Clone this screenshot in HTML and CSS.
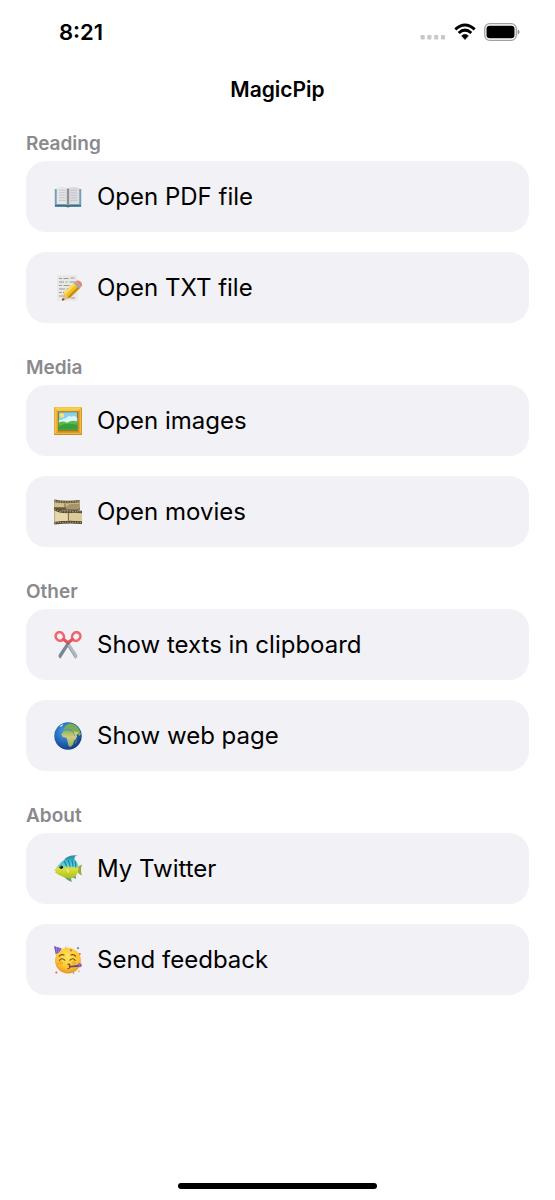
FILE: index.html
```html
<!DOCTYPE html>
<html lang="en">
<head>
<meta charset="utf-8">
<meta name="viewport" content="width=device-width, initial-scale=1">
<title>MagicPip</title>
<link rel="stylesheet" href="styles.css">
</head>
<body>
<div class="screen">
  <div class="status-bar">
    <time class="clock">8:21</time>
    <div class="indicators">
      <svg class="signal" viewBox="0 0 26 18" aria-hidden="true">
        <g fill="#c8c8c8"><rect x=".5" y="12" width="4.200" height="4.500" rx="1"/><rect x="7.300" y="12" width="4.200" height="4.500" rx="1"/><rect x="14.100" y="12" width="4.200" height="4.500" rx="1"/><rect x="20.900" y="12" width="4.200" height="4.500" rx="1"/></g>
      </svg>
      <svg class="wifi" viewBox="0 0 22 18" aria-hidden="true">
        <g fill="none" stroke="#000" stroke-width="3">
          <path d="M1.300 6.300Q11-2.400 20.700 6.300"/>
          <path d="M4.700 10Q11 4.200 17.300 10"/>
        </g>
        <path d="M7.600 12.800Q11 9.700 14.400 12.800L11 16.600Z" stroke="#000" stroke-width=".6" stroke-linejoin="round"/>
      </svg>
      <svg class="battery" viewBox="0 0 36 18" aria-hidden="true">
        <rect x=".7" y=".7" width="31.600" height="16.600" rx="5" fill="#fff" stroke="#a0a0a0" stroke-width="1.300"/>
        <rect x="2.500" y="2.700" width="28" height="12.600" rx="3.200"/>
        <path d="M33.600 6.300Q35.600 7.200 35.600 9T33.600 11.700Z" fill="#8f8f8f"/>
      </svg>
    </div>
  </div>

  <header class="nav-bar"><h1 class="title">MagicPip</h1></header>

  <main class="menu">
    <section class="group" aria-labelledby="reading">
      <h2 class="group-label" id="reading">Reading</h2>
      <div class="cards">
        <button class="card" type="button">
          <svg class="icon" viewBox="0 0 28 28" aria-hidden="true">
            <path d="M.8 6H3V21H25V6H27.200V23.500H16Q14 25 12 23.500H.8Z" fill="#6f9fb8"/>
            <path d="M1 22H27V23.700H16Q14 25 12 23.700H1Z" fill="#3f6f88"/>
            <path d="M2.700 5Q9 2.800 14 5.500V22Q9 19.600 2.700 21.300Z" fill="#e6e5e8"/>
            <path d="M25.300 5Q19 2.800 14 5.500V22Q19 19.600 25.300 21.300Z" fill="#dcdbe0"/>
            <path d="M12.800 5.200L14 5.700 15.200 5.200V21.400L14 22.300 12.800 21.400Z" fill="#8d9298"/>
            <path d="M5 7.500Q8.500 6.500 11.500 7.700M5 10Q8.500 9 11.500 10.200M5 12.500Q8.500 11.500 11.500 12.700M5 15Q8.500 14 11.500 15.200M5 17.500Q8.500 16.500 11.500 17.700M16.500 7.700Q19.500 6.500 23 7.500M16.500 10.200Q19.500 9 23 10M16.500 12.700Q19.500 11.500 23 12.500M16.500 15.200Q19.500 14 23 15M16.500 17.700Q19.500 16.500 23 17.500" fill="none" stroke="#b9b9be" stroke-width=".7"/>
          </svg>
          <span>Open PDF file</span>
        </button>
        <button class="card" type="button">
          <svg class="icon" viewBox="0 0 28 28" aria-hidden="true">
            <rect x="3" y="1" width="20.500" height="26" fill="#e9e8e4"/>
            <path d="M5 4.500h3m1.500 0h5m2-.5h4M5 8h5m1.500 0h2m2 0h5.500M5 11.500h3m1.500 0h6m1.500 0h2M5 15h6m1.500 0h2M5 18.500h3m1 0h2.500M5 22h4M17 24h4" stroke="#96989b" stroke-width="1.100"/>
            <path d="M8.200 26.500L9.700 19 15.200 24.400Z" fill="#e7bd83"/>
            <path d="M8 26.800L8.700 24 10.700 25.700Z" fill="#3b3530"/>
            <path d="M9.700 19L20.400 8.600 26 14 15.200 24.400Z" fill="#f3bd26"/>
            <path d="M9.700 19L20.400 8.600 22.100 10.200 11.500 20.700Z" fill="#ffdc59"/>
            <path d="M13.600 22.800L24.300 12.400 26 14 15.200 24.400Z" fill="#c98a14"/>
            <path d="M19.800 9.200L21.600 7.500 27.100 12.900 25.300 14.600Z" fill="#9ea8ad"/>
            <path d="M21.600 7.500L22.500 6.700Q24.600 5.900 26.600 7.800T27.900 12.100L27.100 12.900Z" fill="#e8827c"/>
          </svg>
          <span>Open TXT file</span>
        </button>
      </div>
    </section>

    <section class="group" aria-labelledby="media">
      <h2 class="group-label" id="media">Media</h2>
      <div class="cards">
        <button class="card" type="button">
          <svg class="icon" viewBox="0 0 28 28" aria-hidden="true">
            <rect width="28" height="28" rx=".7" fill="#d79a20"/>
            <path d="M0 0H28L23.500 5H4.500Z" fill="#f2c744"/>
            <path d="M0 28H28L23.500 23H4.500Z" fill="#c98e1c"/>
            <path d="M0 0L4.500 5V23L0 28Z" fill="#e5ae2d"/>
            <rect x="1.800" y="1.800" width="24.400" height="24.400" fill="none" stroke="#f7d568" stroke-width=".8"/>
            <rect x="3.900" y="4.400" width="20.200" height="19.200" fill="#936214"/>
            <rect x="4.800" y="5.300" width="18.400" height="17.400" fill="#83d3ee"/>
            <circle cx="8" cy="8.500" r="2.300" fill="#fce465"/>
            <path d="M8 13Q9.500 10.300 12 11.500 14 7.500 17.500 9.800 21 7.800 23.200 11V16H4.800V14Q6 12 8 13Z" fill="#dff4fb"/>
            <path d="M4.800 15.500Q9 13.500 13 15.700 18 12.500 23.200 14.300V22.700H4.800Z" fill="#54bd45"/>
            <path d="M4.800 19Q13 15 23.200 18V22.700H4.800Z" fill="#379f3a"/>
          </svg>
          <span>Open images</span>
        </button>
        <button class="card" type="button">
          <svg class="icon" viewBox="0 0 28 28" aria-hidden="true">
            <path d="M.3 1.500Q12 3.800 25.600 2V9.500Q27 12 24 12.500H.3Z" fill="#65573b"/>
            <path d="M.3 4.200Q12 6.300 25.600 4.600V9.300H.3Z" fill="#d2c08b"/>
            <path d="M12.500 8.500Q14 5.800 19 5.800H25.600V11.500H12Z" fill="#a8946a"/>
            <path d="M.3 9.300Q4 13 13 12.600 21 11.800 28 12.700V26Q14 24.700.3 26.500Z" fill="#51462f"/>
            <path d="M.3 12.300Q5 15.600 13 15.200 21 14.500 28 15.300V23.300Q14 22 .3 23.800Z" fill="#dccb98"/>
            <path d="M1.500 13.300Q6 15.400 14 15.200V22.700Q7 22.700 1.500 23.400Z" fill="#eee1b8" opacity=".6"/>
            <path d="M14.400 15.200V22.700M11 5.500V9" stroke="#65573b" stroke-width=".9"/>
            <path d="M1 3Q12 5 25.200 3.300M1 11.200Q5 14.300 13 13.900 21 13.200 27.600 14M1 25Q14 23.500 27.600 24.600" fill="none" stroke="#e2d6b0" stroke-width=".9" stroke-dasharray="1 1.500"/>
          </svg>
          <span>Open movies</span>
        </button>
      </div>
    </section>

    <section class="group" aria-labelledby="other">
      <h2 class="group-label" id="other">Other</h2>
      <div class="cards">
        <button class="card" type="button">
          <svg class="icon" viewBox="0 0 28 28" aria-hidden="true">
            <path d="M17.300 10.500L6.500 27.500Q3.800 26.500 4.900 23.500L14.300 9.500Z" fill="#778894"/>
            <path d="M10.700 10.500L21.500 27.500Q24.200 26.500 23.100 23.500L13.700 9.500Z" fill="#aebac2"/>
            <path d="M12.300 13L21.500 27.500" stroke="#6d7e8a" stroke-width=".6"/>
            <g fill="none" stroke="#ed6670" stroke-width="2.600"><ellipse cx="5.800" cy="5.500" rx="4" ry="4.400" transform="rotate(-35 5.800 5.500)"/><ellipse cx="22.200" cy="5.500" rx="4" ry="4.400" transform="rotate(35 22.200 5.500)"/></g>
            <path d="M9.500 8.300L14.200 12M18.500 8.300L13.800 12" stroke="#e5535f" stroke-width="3" stroke-linecap="round"/>
            <circle cx="14" cy="13" r=".9" fill="#59656e"/>
          </svg>
          <span>Show texts in clipboard</span>
        </button>
        <button class="card" type="button">
          <svg class="icon" viewBox="0 0 28 28" aria-hidden="true">
            <defs><radialGradient id="sea" cx=".4" cy=".35" r=".65"><stop offset="0" stop-color="#4ba4e4"/><stop offset=".6" stop-color="#2468b8"/><stop offset="1" stop-color="#173f86"/></radialGradient>
            <linearGradient id="land" x2="0" y2="1"><stop stop-color="#8ab65a"/><stop offset=".4" stop-color="#d3ca80"/><stop offset="1" stop-color="#8ab65a"/></linearGradient></defs>
            <circle cx="14" cy="14" r="13.700" fill="url(#sea)"/>
            <path d="M10 6.800Q11 3.300 14.500 1.700 19.500 1 23 4.600 26.500 8 27 12.500L25.300 14 23 11.500 21.300 14.500 19.200 10.300 17.500 8.200 15 7.800 13.600 6.300 11.500 8.300Z" fill="#78ad58"/>
            <path d="M10.200 8.700L14.500 8.300 18.800 9.700 20.700 14H23.200Q22.500 17 20 18.800L19 22.500 16.300 25 14.500 23.700 13.300 18.200 12.400 15.700 8.700 15 7.300 12.300Z" fill="url(#land)"/>
            <path d="M19.800 9.300L24.500 10 22.800 13.500 21 14.300Z" fill="#cfc578"/>
            <path d="M21.700 18.700L22.700 18 22 21.300 21.200 21.500Z" fill="#78ad58"/>
            <path d="M5.500 4.500Q7.500 2.400 9.500 2L7.500 4.800Z" fill="#dfeee5"/>
          </svg>
          <span>Show web page</span>
        </button>
      </div>
    </section>

    <section class="group" aria-labelledby="about">
      <h2 class="group-label" id="about">About</h2>
      <div class="cards">
        <a class="card" href="#twitter">
          <svg class="icon" viewBox="0 0 28 28" aria-hidden="true">
            <defs><linearGradient id="scales" x2="0" y2="1"><stop stop-color="#20a9c9"/><stop offset=".38" stop-color="#6ed2cf"/><stop offset=".52" stop-color="#dde13a"/><stop offset="1" stop-color="#a9bd22"/></linearGradient></defs>
            <path d="M10 4.500Q14.500-.3 23.500.3 19.800 1.500 20.500 4.500L19 7Z" fill="#3a8fa5"/>
            <path d="M10 21.500Q12.500 25.500 18 26.700 16.600 24.500 17 22Z" fill="#5c9d85"/>
            <path d="M17.500 22L22 24 21.500 20Z" fill="#4b9a9b"/>
            <path d="M23 13Q25 10.300 28 9.500 26 14.500 28 20.500 25 19.500 23 16.500Z" fill="#9fa93a"/>
            <path d="M.2 15.600Q4 9.500 9 5.700 14 2.600 18.500 3.300 24 5.500 24.600 13.500 24.200 19.700 19.500 22.700 15.500 24.300 10 22.300 5 20.500 1 17.600L2 16.500Z" fill="url(#scales)"/>
            <path d="M10.500 6.500L12.500 11M14.200 5L16 11.200M18 5L19 11.200M21.200 7L21.800 12" stroke="#1788a8" stroke-width="1.200" stroke-linecap="round"/>
            <path d="M12.500 14.300Q15.700 14.500 15 18.300 12.500 17.500 12.500 14.300Z" fill="#eeea70"/>
            <circle cx="7.300" cy="12.300" r="1.800" fill="#171d20"/><circle cx="6.800" cy="11.700" r=".45" fill="#fff"/>
          </svg>
          <span>My Twitter</span>
        </a>
        <button class="card" type="button">
          <svg class="icon" viewBox="0 0 28 28" aria-hidden="true">
            <defs><radialGradient id="face" cx=".5" cy=".35" r=".65"><stop offset="0" stop-color="#ffe45d"/><stop offset=".65" stop-color="#fbc631"/><stop offset="1" stop-color="#e99122"/></radialGradient></defs>
            <circle cx="14" cy="14.700" r="12.900" fill="url(#face)"/>
            <path d="M0 0L7.800 2.500Q6 6.500 1.700 8.500Z" fill="#7956b5"/>
            <path d="M2.600 1L2.300 6.800M5.300 1.900L4.300 6.500" stroke="#aa8bdc" stroke-width=".8"/>
            <path d="M5.500 14.300Q8 11.200 10.700 14.200M16 14.200Q18.700 11.200 21.200 14.300M5.200 10.200Q7.300 8 10 9M17 9Q19.700 8 21.700 10.200" fill="none" stroke="#724313" stroke-width="1.150" stroke-linecap="round"/>
            <ellipse cx="6.500" cy="17" rx="2.600" ry="1.700" fill="#f29a36" opacity=".65"/><ellipse cx="20" cy="17" rx="2.600" ry="1.700" fill="#f29a36" opacity=".65"/>
            <path d="M14 18.200Q17.200 18.500 15.300 20.300 17.200 21.600 14 22.700" fill="none" stroke="#8b4b19" stroke-width="1.200" stroke-linecap="round"/>
            <path d="M15.500 19.900L26 18.500V20.800L15.700 21.500Z" fill="#6b477d"/>
            <circle cx="25.700" cy="19.300" r="2" fill="#7956b5"/><circle cx="25.700" cy="19.300" r=".7" fill="#ad91db"/>
            <g fill="#e5576c"><circle cx="17" cy="4.300" r="1.100"/><circle cx="2.300" cy="26.400" r="1"/><circle cx="25.800" cy="8" r=".9"/></g>
            <g fill="#489bd2"><circle cx="24" cy="2.200" r="1.100"/><circle cx="19.500" cy="27" r=".8"/></g>
            <g fill="#e9b940"><circle cx="11.800" cy="1.200" r=".8"/><circle cx="25" cy="25.300" r=".9"/></g>
          </svg>
          <span>Send feedback</span>
        </button>
      </div>
    </section>
  </main>
  <div class="home-indicator"></div>
</div>
</body>
</html>
```
FILE: styles.css
```css
* { box-sizing: border-box; }

body {
  margin: 0;
  background: #fff;
  color: #000;
  font-family: Inter, "Liberation Sans", sans-serif;
}

.screen {
  display: flex;
  flex-direction: column;
  min-height: 100vh;
  padding-bottom: 11px;
}

.status-bar {
  display: flex;
  align-items: center;
  justify-content: space-between;
  height: 64px;
  padding: 0 35px 0 59px;
}

.clock {
  font-size: 22px;
  font-weight: 600;
}

.indicators {
  display: flex;
  align-items: center;
  gap: 8px;
}

.signal { width: 26px; height: 18px; }
.wifi { width: 22px; height: 18px; }
.battery { width: 36px; height: 18px; }

.nav-bar {
  display: flex;
  align-items: center;
  justify-content: center;
  height: 52px;
}

.title {
  margin: 0;
  font-size: 21px;
  font-weight: 600;
  line-height: 28px;
}

.menu {
  display: flex;
  flex-direction: column;
  gap: 32px;
  flex: 1;
  padding: 15px 26px 32px;
}

.group-label {
  margin: 0 0 4px;
  color: #8a8a8e;
  font-size: 19px;
  font-weight: 600;
  line-height: 26px;
}

.cards {
  display: flex;
  flex-direction: column;
  gap: 20px;
}

.card {
  display: flex;
  align-items: center;
  gap: 15px;
  width: 100%;
  min-height: 71px;
  padding: 0 28px;
  border: 0;
  border-radius: 20px;
  background: #f2f1f6;
  color: #000;
  font: 400 24px/32px Inter, "Liberation Sans", sans-serif;
  text-align: left;
  text-decoration: none;
}

.icon {
  flex: none;
  width: 28px;
  height: 28px;
}

.home-indicator {
  align-self: center;
  width: 36%;
  height: 6px;
  border-radius: 3px;
  background: #000;
}
```
